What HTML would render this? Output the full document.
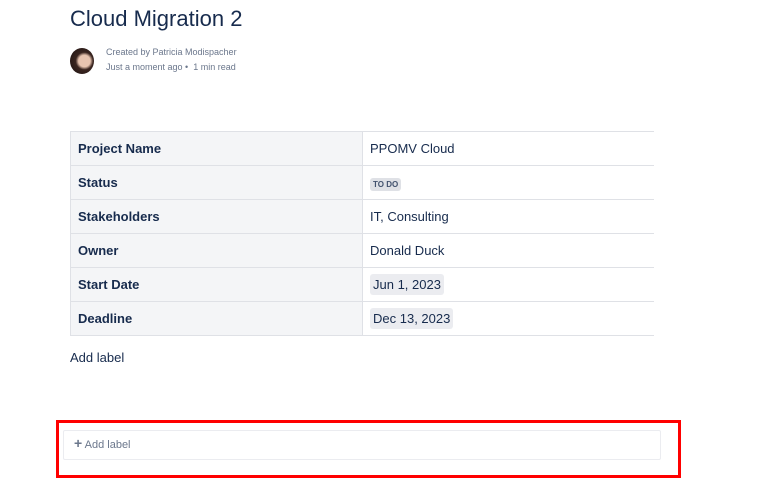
<!DOCTYPE html>
<html><head><style>
body{margin:0;width:768px;height:499px;background:#fff;font-family:"Liberation Sans",sans-serif;color:#172b4d;position:relative;overflow:hidden}
.a{position:absolute}
table{position:absolute;left:70px;top:131px;border-collapse:collapse;width:584px}
td{height:34px;border:1px solid #dfe1e6;font-size:13px;padding:0 0 0 7px;box-sizing:border-box}
td.h{background:#f4f5f7;font-weight:bold;width:292px}
td.v{border-right:none}
.pill{background:#ebecf0;border-radius:3px;padding:3px 3px}
.lz{background:#dfe1e6;font-size:8px;font-weight:bold;padding:2px 3px;border-radius:3px;color:#42526e}
</style></head><body>
<div class="a" style="left:70px;top:6px;font-size:22px;color:#172b4d">Cloud Migration 2</div>
<div class="a" style="left:70px;top:48px;width:24px;height:26px;border-radius:50%;background:radial-gradient(circle at 60% 50%,#e8c4b0 0 30%,#3a2520 45%,#1a1010 100%)"></div>
<div class="a" style="left:106px;top:47px;font-size:9px;color:#6b778c">Created by Patricia Modispacher</div>
<div class="a" style="left:106px;top:62px;font-size:9px;color:#6b778c">Just a moment ago • &nbsp;1 min read</div>
<table>
<tr><td class="h">Project Name</td><td class="v">PPOMV Cloud</td></tr>
<tr><td class="h">Status</td><td class="v"><span class="lz">TO DO</span></td></tr>
<tr><td class="h">Stakeholders</td><td class="v">IT, Consulting</td></tr>
<tr><td class="h">Owner</td><td class="v">Donald Duck</td></tr>
<tr><td class="h">Start Date</td><td class="v"><span class="pill">Jun 1, 2023</span></td></tr>
<tr><td class="h">Deadline</td><td class="v"><span class="pill">Dec 13, 2023</span></td></tr>
</table>
<div class="a" style="left:70px;top:350px;font-size:13px">Add label</div>
<div class="a" style="left:56px;top:420px;width:619px;height:52px;border:3px solid #f00"></div>
<div class="a" style="left:63px;top:430px;width:596px;height:28px;border:1px solid #ebecf0;border-radius:2px"></div>
<div class="a" style="left:74px;top:438px;font-size:11px;color:#6b778c"><b style="font-size:14px;line-height:10px">+</b> Add label</div>
</body></html>
